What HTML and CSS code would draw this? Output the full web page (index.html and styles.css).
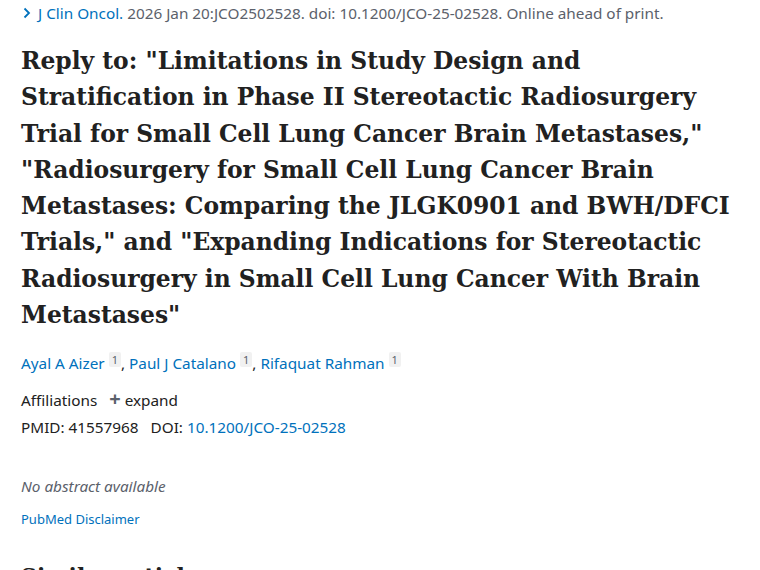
FILE: index.html
```html
<!DOCTYPE html>
<html>
<head>
<meta charset="utf-8">
<link rel="stylesheet" href="styles.css">
</head>
<body>
<main class="page">
  <div class="cite">
    <svg class="chev" width="10" height="12" viewBox="0 0 10 12"><path d="M2.5 1.5 L7 6 L2.5 10.5" fill="none" stroke="#0071bc" stroke-width="1.8"/></svg>
    <span><span class="journal">J Clin Oncol.</span> 2026 Jan 20:JCO2502528. doi: 10.1200/JCO-25-02528. Online ahead of print.</span>
  </div>
  <h1 class="title">Reply to: "Limitations in Study Design and<br>Stratification in Phase II Stereotactic Radiosurgery<br>Trial for Small Cell Lung Cancer Brain Metastases,"<br>"Radiosurgery for Small Cell Lung Cancer Brain<br>Metastases: Comparing the JLGK0901 and BWH/DFCI<br>Trials," and "Expanding Indications for Stereotactic<br>Radiosurgery in Small Cell Lung Cancer With Brain<br>Metastases"</h1>
  <div class="authors">
    <a class="link">Ayal A Aizer</a> <sup class="aff">1</sup>, <a class="link">Paul J Catalano</a> <sup class="aff">1</sup>, <a class="link">Rifaquat Rahman</a> <sup class="aff">1</sup>
  </div>
  <div class="affil">Affiliations <span class="expand"><span class="plus">+</span> expand</span></div>
  <div class="ids">PMID: 41557968 <span class="doi">DOI: <a class="link">10.1200/JCO-25-02528</a></span></div>
  <p class="noabs">No abstract available</p>
  <a class="link disc">PubMed Disclaimer</a>
  <h2 class="similar">Similar articles</h2>
</main>
</body>
</html>
```
FILE: styles.css
```css
html, body { margin: 0; padding: 0; background: #fff; }
body { font-family: "Noto Sans", "Open Sans", sans-serif; color: #212121; overflow: hidden; height: 570px; }
.page { padding: 0 21px; }
.cite { font-size: 15.3px; color: #5b616b; padding-top: 2px; height: 22px; display: flex; align-items: center; white-space: nowrap; }
.chev { margin-right: 6px; margin-left: 1px; }
.journal { color: #0071bc; }
.title { font-family: "DejaVu Serif", serif; font-weight: bold; font-size: 23.4px; line-height: 36.3px; margin: 19px 0 0; color: #212121; white-space: nowrap; }
.authors { font-size: 15.3px; margin-top: 19px; color: #212121; }
.link { color: #0071bc; text-decoration: none; }
.aff { font-size: 11px; background: #f1f1f1; color: #5b616b; padding: 0 3px; border-radius: 2px; vertical-align: 5px; }
.affil { font-size: 15.3px; margin-top: 16px; }
.expand { margin-left: 8px; }
.plus { font-size: 20px; font-weight: bold; color: #5b616b; line-height: 1; }
.ids { font-size: 15.3px; margin-top: 7px; }
.doi { margin-left: 8px; }
.noabs { font-style: italic; color: #5b616b; font-size: 15.3px; margin: 39px 0 0; }
.disc { display: block; font-size: 13px; margin-top: 14px; }
.similar { font-family: "DejaVu Serif", serif; font-size: 22px; margin: 35px 0 0; }
```
